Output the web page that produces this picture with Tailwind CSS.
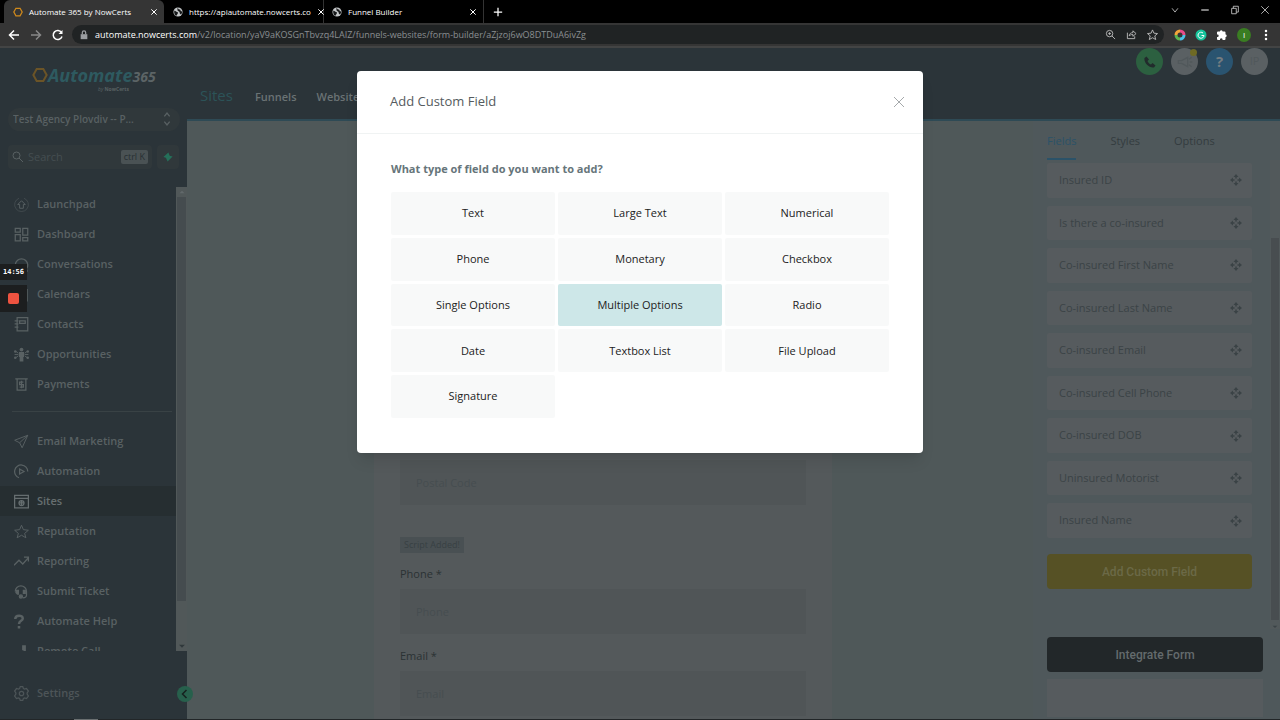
<!DOCTYPE html>
<html lang="en">
<head>
    <meta charset="UTF-8">
    <meta name="viewport" content="width=device-width, initial-scale=1.0">
    <title>Automate 365 by NowCerts</title>
    <script src="https://cdn.jsdelivr.net/npm/@tailwindcss/browser@4"></script>
</head>
<body class="relative h-screen overflow-hidden flex flex-col bg-[#2b3439] font-['Open_Sans','Noto_Sans',sans-serif] text-[11px]">
    <!-- Shared icons -->
    <svg class="hidden">
        <symbol id="move" viewBox="0 0 24 24">
            <path d="M12 0l5 6H7zM12 24l5-6H7zM0 12l6-5v10zM24 12l-6-5v10z" fill="currentColor"/>
            <path d="M12 5v4M12 15v4M5 12h4M15 12h4" stroke="currentColor" stroke-width="3" fill="none"/>
        </symbol>
        <symbol id="globe" viewBox="0 0 24 24">
            <circle cx="12" cy="12" r="11" fill="#c4c7c9"/>
            <path d="M3 9c4-1 4 3 7 3s2 4 0 6-1 4-3 3-5-6-4-12zM13 2c-2 3 0 4 3 4s1 4 4 4 2 5 0 7-4-1-4-4-5-2-5-5-2-5 2-6z" fill="#17191a"/>
        </symbol>
        <symbol id="cross" viewBox="0 0 24 24">
            <path d="M4 4l16 16M20 4L4 20" stroke="currentColor" fill="none" stroke-width="3"/>
        </symbol>
    </svg>

    <!-- Browser tabs -->
    <div class="h-[23px] shrink-0 flex items-stretch bg-black text-white text-[8px]">
        <div class="w-[160px] ml-1 flex items-center gap-1.5 pl-[9px] pr-1.5 rounded-t-md bg-[#353535]">
            <svg class="size-[10px] shrink-0" viewBox="0 0 24 24"><path d="M7 3h10l5 9-5 9H7l-5-9z" fill="none" stroke="#d08a1c" stroke-width="3"/></svg>
            <span class="grow whitespace-nowrap">Automate 365 by NowCerts</span>
            <button aria-label="Close tab"><svg class="size-2"><use href="#cross"/></svg></button>
        </div>
        <div class="w-[160px] flex items-center gap-1.5 pl-[9px] pr-1.5 border-r border-[#333]">
            <svg class="size-[10px] shrink-0"><use href="#globe"/></svg>
            <span class="grow whitespace-nowrap">https://apiautomate.nowcerts.co</span>
            <button aria-label="Close tab"><svg class="size-2"><use href="#cross"/></svg></button>
        </div>
        <div class="w-[160px] flex items-center gap-1.5 pl-2 pr-1.5 border-r border-[#333]">
            <svg class="size-[10px] shrink-0"><use href="#globe"/></svg>
            <span class="grow whitespace-nowrap">Funnel Builder</span>
            <button aria-label="Close tab"><svg class="size-2"><use href="#cross"/></svg></button>
        </div>
        <button class="px-[9px]" aria-label="New tab">
            <svg class="size-[10px]" viewBox="0 0 24 24"><path d="M12 2v20M2 12h20" stroke="currentColor" stroke-width="3"/></svg>
        </button>
        <div class="ml-auto mr-2.5 pb-1 flex items-center gap-5 text-[#ccc]">
            <svg class="size-[10px]" viewBox="0 0 24 24"><path d="M5 8l7 9 7-9" fill="none" stroke="currentColor" stroke-width="2"/></svg>
            <svg class="size-[10px]" viewBox="0 0 24 24"><path d="M3 12h18" stroke="currentColor" stroke-width="3"/></svg>
            <svg class="size-[10px]" viewBox="0 0 24 24" fill="none" stroke="currentColor" stroke-width="2"><path d="M4 8h11v13H4zM8 8V3h12v14h-5"/></svg>
            <svg class="size-[10px]" viewBox="0 0 24 24"><path d="M3 3l18 18M21 3L3 21" stroke="currentColor" stroke-width="2"/></svg>
        </div>
    </div>

    <!-- Address bar -->
    <div class="h-[25px] shrink-0 flex items-center bg-[#353535] border-b-2 border-[#434444] px-2 text-white">
        <div class="flex items-center gap-2.5 shrink-0">
            <svg class="size-3" viewBox="0 0 24 24" fill="none" stroke="currentColor" stroke-width="3"><path d="M22 12H3M12 3l-9 9 9 9"/></svg>
            <svg class="size-3 text-[#888]" viewBox="0 0 24 24" fill="none" stroke="currentColor" stroke-width="3"><path d="M2 12h19M12 3l9 9-9 9"/></svg>
            <svg class="size-3" viewBox="0 0 24 24" fill="none" stroke="currentColor" stroke-width="3"><path d="M20 15a9 9 0 1 1-1-8"/><path d="M21 2v8h-8z" fill="currentColor" stroke="none"/></svg>
        </div>
        <div class="ml-2 grow h-[19px] rounded-full bg-[#202324] flex items-center gap-1.5 pl-[7px] pr-1.5">
            <svg class="size-[10px] text-[#9a9da0]" viewBox="0 0 24 24"><rect x="4" y="10" width="16" height="12" fill="currentColor"/><path d="M8 10V6a4 4 0 0 1 8 0v4" fill="none" stroke="currentColor" stroke-width="3"/></svg>
            <div class="grow text-[9px] text-[#8b8f92] whitespace-nowrap" role="textbox" aria-label="Address"><span class="text-white">automate.nowcerts.com</span>/v2/location/yaV9aKOSGnTbvzq4LAIZ/funnels-websites/form-builder/aZjzoj6wO8DTDuA6ivZg</div>
            <div class="flex gap-2.5 text-[#bbb]">
                <svg class="size-[11px]" viewBox="0 0 24 24" fill="none" stroke="currentColor" stroke-width="2"><circle cx="10" cy="10" r="7"/><path d="M15 15l7 7M10 7v6M7 10h6"/></svg>
                <svg class="size-[11px]" viewBox="0 0 24 24" fill="none" stroke="currentColor" stroke-width="2"><path d="M3 8v13h16v-5M7 15c0-5 4-7 8-7V4l7 6-7 6v-4c-4 0-6 1-8 3z"/></svg>
                <svg class="size-[11px]" viewBox="0 0 24 24" fill="none" stroke="currentColor" stroke-width="2"><path d="M12 2l3 7 8 1-6 5 2 8-7-4-7 4 2-8-6-5 8-1z"/></svg>
            </div>
        </div>
        <div class="ml-2.5 flex items-center gap-[9px] shrink-0">
            <svg class="size-3" viewBox="0 0 24 24" fill="none" stroke-width="6"><path d="M12 4a8 8 0 0 1 8 8" stroke="#e94b8a"/><path d="M20 12a8 8 0 0 1-8 8" stroke="#4ac3e8"/><path d="M12 20a8 8 0 0 1-8-8" stroke="#5ab552"/><path d="M4 12a8 8 0 0 1 8-8" stroke="#f2a53a"/></svg>
            <svg class="size-3" viewBox="0 0 24 24" fill="none"><circle cx="12" cy="12" r="11" fill="#15c39a"/><path d="M16 8a6 6 0 1 0 2 5h-5" stroke="#fff" stroke-width="2"/></svg>
            <svg class="size-3" viewBox="0 0 24 24" fill="currentColor"><path d="M20 11h-1V7a2 2 0 0 0-2-2h-4V4a3 3 0 0 0-5 0v1H4a2 2 0 0 0-2 2v4h2a3 3 0 0 1 0 5H2v4a2 2 0 0 0 2 2h4v-2a3 3 0 0 1 5 0v2h4a2 2 0 0 0 2-2v-4h1a3 3 0 0 0 0-5z"/></svg>
            <span class="size-[14px] rounded-full bg-[#3a7d22] flex items-center justify-center text-[8px]">I</span>
            <svg class="size-3" viewBox="0 0 24 24" fill="currentColor"><circle cx="12" cy="4" r="2.5"/><circle cx="12" cy="12" r="2.5"/><circle cx="12" cy="20" r="2.5"/></svg>
        </div>
    </div>

    <div class="grow min-h-0 flex border-b border-[#222628]">
        <!-- Sidebar -->
        <aside class="relative w-[187px] shrink-0 flex flex-col bg-[#2b3439] text-[#596163]">
            <div class="h-[60px] pt-[17px] pl-8 flex items-start">
                <svg class="size-4 mt-0.5" viewBox="0 0 24 24"><path d="M7 3h10l5 9-5 9H7l-5-9z" fill="none" stroke="#6b5427" stroke-width="3"/></svg>
                <div class="leading-none">
                    <div class="font-bold italic text-lg leading-[20px] text-[#2e5a60]">Automate<span class="text-sm text-[#5c6466]">365</span></div>
                    <div class="pl-[50px] text-[5px] leading-none"><span class="italic">by</span> <b>NowCerts</b></div>
                </div>
            </div>
            <div class="px-2">
                <div class="relative">
                    <select aria-label="Location" class="appearance-none w-[172px] h-[23px] rounded-full bg-[#30383b] pl-[5px] text-[10px] font-semibold">
                        <option>Test Agency Plovdiv -- P...</option>
                    </select>
                    <svg class="absolute right-1 top-[3px] size-4 pointer-events-none" viewBox="0 0 24 24" fill="none" stroke="currentColor" stroke-width="2"><path d="M8 8l4-5 4 5M8 16l4 5 4-5"/></svg>
                </div>
                <div class="flex gap-[5px] mt-3.5">
                    <label class="w-[144px] h-6 flex items-center gap-1 px-1 rounded-sm bg-[#30383b]">
                        <svg class="size-3 shrink-0" viewBox="0 0 24 24" fill="none" stroke="currentColor" stroke-width="2"><circle cx="9" cy="9" r="7"/><path d="M14 14l8 8"/></svg>
                        <input type="text" placeholder="Search" aria-label="Search" class="grow min-w-0 placeholder:text-[#454e51]">
                        <kbd class="shrink-0 whitespace-nowrap px-[3px] rounded-xs bg-[#4a5254] text-[#283033] text-[9px] leading-[14px] font-['Open_Sans',sans-serif]">ctrl K</kbd>
                    </label>
                    <button aria-label="Quick actions" class="w-6 h-6 rounded-sm bg-[#30383b] flex items-center justify-center">
                        <svg class="size-[10px]" viewBox="0 0 24 24"><path d="M13 1L1 12l6 2 4 9 12-12-7-2z" fill="#25705a"/></svg>
                    </button>
                </div>
            </div>

            <div class="mt-[18px] h-[464px] flex overflow-hidden">
                <nav class="grow pt-0.5 font-semibold">
                    <a href="#" class="h-[30px] flex items-center gap-2 pl-3.5">
                        <svg class="size-[15px]" viewBox="0 0 24 24" fill="none" stroke="currentColor" stroke-width="1.5"><path d="M8 2a11 11 0 1 0 8 0" opacity=".5"/><path d="M9 18v-6H6l6-6 6 6h-3v6z"/></svg>Launchpad</a>
                    <a href="#" class="h-[30px] flex items-center gap-2 pl-3.5">
                        <svg class="size-[15px]" viewBox="0 0 24 24" fill="none" stroke="currentColor" stroke-width="2"><path d="M2 2h8v6H2zM14 2h8v11h-8zM2 12h8v10H2zM14 17h8v5h-8z"/></svg>Dashboard</a>
                    <a href="#" class="h-[30px] flex items-center gap-2 pl-3.5">
                        <svg class="size-[15px]" viewBox="0 0 24 24" fill="none" stroke="currentColor" stroke-width="2"><path d="M4 19a10 10 0 1 1 16 0l1 3-4-1H7z"/></svg>Conversations</a>
                    <a href="#" class="h-[30px] flex items-center gap-2 pl-3.5">
                        <svg class="size-[15px]" viewBox="0 0 24 24" fill="none" stroke="currentColor" stroke-width="2"><path d="M2 4h19v18H2zM2 9h19"/></svg>Calendars</a>
                    <a href="#" class="h-[30px] flex items-center gap-2 pl-3.5">
                        <svg class="size-[15px]" viewBox="0 0 24 24" fill="none" stroke="currentColor" stroke-width="2"><path d="M5 1h17v21H5zM9 6h9v4H9zM1 6h6M1 11h6M1 16h6"/></svg>Contacts</a>
                    <a href="#" class="h-[30px] flex items-center gap-2 pl-3.5">
                        <svg class="size-[15px]" viewBox="0 0 24 24" fill="currentColor"><circle cx="12" cy="4" r="3"/><path d="M8 8h8v8h-1v7H9v-7H8z"/><circle cx="2" cy="7" r="2"/><circle cx="22" cy="7" r="2"/><circle cx="2" cy="17" r="2"/><circle cx="22" cy="17" r="2"/><path d="M1 12h6M17 12h6M3 7l4 3M21 7l-4 3M3 17l4-3M21 17l-4-3" stroke="currentColor" stroke-width="1.5"/></svg>Opportunities</a>
                    <a href="#" class="h-[30px] flex items-center gap-2 pl-3.5">
                        <svg class="size-[15px]" viewBox="0 0 24 24" fill="none" stroke="currentColor" stroke-width="2"><path d="M2 3h20M5 3v18h14V3M15 8H9v4h6v4H9M12 6v12"/></svg>Payments</a>
                    <hr class="ml-3 mr-1 mt-3 mb-3.5 border-[#394245]">
                    <a href="#" class="h-[30px] flex items-center gap-2 pl-3.5">
                        <svg class="size-[15px]" viewBox="0 0 24 24" fill="none" stroke="currentColor" stroke-width="1.5"><path d="M22 2L1 10l8 4 4 8zM22 2L9 14"/></svg>Email Marketing</a>
                    <a href="#" class="h-[30px] flex items-center gap-2 pl-3.5">
                        <svg class="size-[15px]" viewBox="0 0 24 24" fill="none" stroke="currentColor" stroke-width="2"><path d="M8 22A10.500 10.500 0 1 1 22 12M9 8v8l7-4z"/></svg>Automation</a>
                    <a href="#" class="h-[30px] flex items-center gap-2 pl-3.5 bg-[#262e31] text-[#666e70]">
                        <svg class="size-[15px]" viewBox="0 0 24 24" fill="none" stroke="currentColor" stroke-width="2"><path d="M1 2h22v20H1zM1 7h22"/><circle cx="12" cy="14.500" r="4"/><path d="M8 14h8M12 10v9"/></svg>Sites</a>
                    <a href="#" class="h-[30px] flex items-center gap-2 pl-3.5">
                        <svg class="size-[15px]" viewBox="0 0 24 24" fill="none" stroke="currentColor" stroke-width="1.5"><path d="M12 2l3 7 8 1-6 5 2 7-7-4-7 4 2-7-6-5 8-1z"/></svg>Reputation</a>
                    <a href="#" class="h-[30px] flex items-center gap-2 pl-3.5">
                        <svg class="size-[15px]" viewBox="0 0 24 24" fill="none" stroke="currentColor" stroke-width="2"><path d="M0 18l8-8 6 6 9-10M16 5h7v7"/></svg>Reporting</a>
                    <a href="#" class="h-[30px] flex items-center gap-2 pl-3.5">
                        <svg class="size-[15px]" viewBox="0 0 24 24" fill="none" stroke="currentColor" stroke-width="2"><path d="M2 12a9 9 0 0 1 18 0v6c0 3-2 4-6 4"/><path d="M3 9h5v8H5l-3-3zM14 9h5v7h-5z" fill="currentColor" stroke="none"/><circle cx="11" cy="20" r="2.500" fill="currentColor"/></svg>Submit Ticket</a>
                    <a href="#" class="h-[30px] flex items-center gap-2 pl-3.5">
                        <svg class="size-[15px]" viewBox="0 0 24 24" fill="none" stroke="currentColor" stroke-width="4"><path d="M2 8c0-7 12-7 12-1 0 4-6 4-6 9M8 19v4"/></svg>Automate Help</a>
                    <a href="#" class="h-[30px] flex items-center gap-2 pl-3.5">
                        <svg class="size-[15px]" viewBox="0 0 24 24" fill="currentColor"><path d="M13 2h6v10l-3 3-1-5h-2z"/></svg>Remote Call</a>
                </nav>
                <!-- Scrollbar -->
                <div class="w-[11px] flex flex-col items-center justify-between bg-[#515859] text-[#30383b]">
                    <svg class="size-[10px] text-[#62696b]" viewBox="0 0 24 24"><path d="M6 15l6-6 6 6z" fill="currentColor"/></svg>
                    <div class="grow w-[9px] mb-10 bg-[#454c4f]"></div>
                    <svg class="size-[10px]" viewBox="0 0 24 24"><path d="M5 9l7 7 7-7z" fill="currentColor"/></svg>
                </div>
            </div>
            <a href="#" class="mt-[27px] h-[30px] flex items-center gap-2 pl-3.5 font-semibold text-[#4d5558]">
                <svg class="size-[15px]" viewBox="0 0 24 24" fill="none" stroke="currentColor" stroke-width="2"><circle cx="12" cy="12" r="3.500"/><path d="M10 1h4l1 3 2 1 3-1 3 4-2 3v2l2 3-3 4-3-1-2 1-1 3h-4l-1-3-2-1-3 1-3-4 2-3v-2L1 8l3-4 3 1 2-1z"/></svg>Settings</a>
            <button aria-label="Collapse sidebar" class="absolute -right-1.5 bottom-[17px] z-10 size-4 rounded-full bg-[#27604c] text-[#16211f] flex items-center justify-center">
                <svg class="size-3" viewBox="0 0 24 24" fill="none" stroke="currentColor" stroke-width="3"><path d="M15 4l-8 8 8 8"/></svg>
            </button>
        </aside>

        <div class="grow min-w-0 flex flex-col">
            <!-- Top bar -->
            <header class="h-[73px] shrink-0 flex justify-between border-b-2 border-[#2e4a55] pl-[13px] pr-3">
                <nav class="flex items-center gap-5 pt-7 font-semibold text-[#6a7274]">
                    <a href="#" class="pr-0.5 pb-1 text-[15px] font-normal text-[#2c5358]">Sites</a>
                    <a href="#">Funnels</a>
                    <a href="#">Websites</a>
                </nav>
                <div class="flex gap-2">
                    <button aria-label="Call" class="size-[27px] rounded-full bg-[#2c6040] text-[#222b2c] flex items-center justify-center">
                        <svg class="size-3" viewBox="0 0 24 24" fill="currentColor"><path d="M1 4l4-3 5 6-3 3c1 3 4 6 7 7l3-3 6 5-3 4C10 25-1 13 1 4z"/></svg>
                    </button>
                    <button aria-label="Announcements" class="relative size-[27px] rounded-full bg-[#5a6063] text-[#51585b] flex items-center justify-center">
                        <svg class="size-4" viewBox="0 0 24 24" fill="none" stroke="currentColor" stroke-width="2"><path d="M2 10h5l9-5v14l-9-5H2zM18 8l4-3M19 12h4M18 16l4 3"/></svg>
                        <span class="absolute right-px top-px size-[7px] rounded-full bg-[#6e6a24]"></span>
                    </button>
                    <button aria-label="Help" class="size-[27px] rounded-full bg-[#2a5470] text-[#747c80] font-bold text-[15px] flex items-center justify-center">?</button>
                    <button aria-label="Account" class="size-[27px] rounded-full bg-[#5a6063] text-[#51585b] flex items-center justify-center">IP</button>
                </div>
            </header>

            <div class="grow min-h-0 flex">
                <!-- Form canvas -->
                <main class="grow min-w-0 flex justify-center overflow-hidden bg-[#4f5859] pr-3.5">
                    <form class="w-[458px] flex flex-col justify-end bg-[#54595b] px-[26px] pb-[3px] text-[#2b3234]">
                        <input type="text" aria-label="Postal Code" placeholder="Postal Code" class="h-[45px] shrink-0 px-4 bg-[#505557] placeholder:text-[#464d50]">
                        <span class="self-start mt-8 px-1 bg-[#495053] text-[9px] leading-4 text-[#384043]">Script Added!</span>
                        <label for="phone" class="mt-3 leading-[18px]">Phone *</label>
                        <input id="phone" type="tel" placeholder="Phone" class="mt-1.5 h-[45px] shrink-0 px-4 bg-[#505557] placeholder:text-[#464d50]">
                        <label for="email" class="mt-[13px] leading-[18px]">Email *</label>
                        <input id="email" type="email" placeholder="Email" class="mt-1.5 h-[45px] shrink-0 px-4 bg-[#505557] placeholder:text-[#464d50]">
                    </form>
                </main>

                <!-- Field panel -->
                <aside class="w-[247px] shrink-0 flex flex-col bg-[#4f585b] pl-3.5">
                    <nav class="h-[39px] shrink-0 flex items-stretch gap-[34px] text-[#343c3f]">
                        <a href="#" class="pt-3 border-b-2 border-[#2b5268] text-[#2b5268]">Fields</a>
                        <a href="#" class="pt-3">Styles</a>
                        <a href="#" class="pt-3">Options</a>
                    </nav>
                    <div class="flex">
                        <div class="grow">
                            <ul class="mt-[3px] mr-[18px] h-[375px] grid auto-rows-fr gap-2 text-[#3b4346]">
                                <li class="flex items-center justify-between pl-3 pr-2.5 rounded-xs bg-[#565b5e]">Insured ID<svg class="size-3"><use href="#move"/></svg></li>
                                <li class="flex items-center justify-between pl-3 pr-2.5 rounded-xs bg-[#565b5e]">Is there a co-insured<svg class="size-3"><use href="#move"/></svg></li>
                                <li class="flex items-center justify-between pl-3 pr-2.5 rounded-xs bg-[#565b5e]">Co-insured First Name<svg class="size-3"><use href="#move"/></svg></li>
                                <li class="flex items-center justify-between pl-3 pr-2.5 rounded-xs bg-[#565b5e]">Co-insured Last Name<svg class="size-3"><use href="#move"/></svg></li>
                                <li class="flex items-center justify-between pl-3 pr-2.5 rounded-xs bg-[#565b5e]">Co-insured Email<svg class="size-3"><use href="#move"/></svg></li>
                                <li class="flex items-center justify-between pl-3 pr-2.5 rounded-xs bg-[#565b5e]">Co-insured Cell Phone<svg class="size-3"><use href="#move"/></svg></li>
                                <li class="flex items-center justify-between pl-3 pr-2.5 rounded-xs bg-[#565b5e]">Co-insured DOB<svg class="size-3"><use href="#move"/></svg></li>
                                <li class="flex items-center justify-between pl-3 pr-2.5 rounded-xs bg-[#565b5e]">Uninsured Motorist<svg class="size-3"><use href="#move"/></svg></li>
                                <li class="flex items-center justify-between pl-3 pr-2.5 rounded-xs bg-[#565b5e]">Insured Name<svg class="size-3"><use href="#move"/></svg></li>
                            </ul>
                            <div class="mt-4 mr-[18px] flex">
                                <button class="grow h-[35px] rounded-sm bg-[#565125] text-[#6b6947] text-xs font-medium font-[Roboto,sans-serif]">Add Custom Field</button>
                            </div>
                        </div>
                        <!-- Scrollbar -->
                        <div class="w-[10px] h-[469px] pt-[78px] flex flex-col items-center gap-1 bg-[#52595b] text-[#3b4346]">
                            <div class="w-2 h-[382px] shrink-0 bg-[#484d50]"></div>
                            <svg class="size-2 shrink-0" viewBox="0 0 24 24"><path d="M5 5l7 7 7-7z" fill="currentColor"/></svg>
                        </div>
                    </div>
                    <div class="mt-2 mr-[17px] flex flex-col gap-[7px]">
                        <button class="h-[35px] rounded-sm bg-[#222729] text-[#646b6d] text-xs font-medium font-[Roboto,sans-serif]">Integrate Form</button>
                        <div class="h-[38px] bg-[#565b5e]"></div>
                    </div>
                </aside>
            </div>
        </div>
    </div>

    <!-- Recorder controls -->
    <div class="absolute left-0 top-[264px] z-20 w-[27px]">
        <div class="h-4 bg-[#1c1e1f] text-white text-[7px] leading-4 font-bold text-center font-['DejaVu_Sans_Mono',monospace]">14:56</div>
        <button aria-label="Stop recording" class="mt-[5px] w-full h-[27px] bg-[#1c1e1f] flex items-center justify-center"><span class="size-[11px] rounded-xs bg-[#ee5340]"></span></button>
    </div>
    <div class="absolute left-[74px] bottom-0 w-6 h-px bg-[#6a6f70]"></div>

    <!-- Add custom field dialog -->
    <div class="absolute inset-x-0 top-[71px] z-30 flex justify-center">
        <section role="dialog" aria-labelledby="dialogTitle" class="w-full max-w-[566px] rounded-sm bg-white shadow-lg">
            <header class="h-[63px] flex items-center justify-between pl-[33px] pr-[18px] border-b border-[#f0f3f3]">
                <h2 id="dialogTitle" class="text-[13px] text-[#555b5e]">Add Custom Field</h2>
                <button aria-label="Close" class="text-[#a5a9ab]"><svg class="size-3" viewBox="0 0 24 24"><path d="M2 2l20 20M22 2L2 22" stroke="currentColor" stroke-width="2"/></svg></button>
            </header>
            <div class="px-[34px] pt-[26px] pb-[35px]">
                <h3 class="font-bold leading-[18px] text-[#66757a]">What type of field do you want to add?</h3>
                <div class="mt-3.5 h-[226px] grid grid-cols-3 auto-rows-fr gap-[3px] text-[#222]">
                    <button class="rounded-xs bg-[#f8f9f9]">Text</button>
                    <button class="rounded-xs bg-[#f8f9f9]">Large Text</button>
                    <button class="rounded-xs bg-[#f8f9f9]">Numerical</button>
                    <button class="rounded-xs bg-[#f8f9f9]">Phone</button>
                    <button class="rounded-xs bg-[#f8f9f9]">Monetary</button>
                    <button class="rounded-xs bg-[#f8f9f9]">Checkbox</button>
                    <button class="rounded-xs bg-[#f8f9f9]">Single Options</button>
                    <button class="rounded-xs bg-[#cde7e8]">Multiple Options</button>
                    <button class="rounded-xs bg-[#f8f9f9]">Radio</button>
                    <button class="rounded-xs bg-[#f8f9f9]">Date</button>
                    <button class="rounded-xs bg-[#f8f9f9]">Textbox List</button>
                    <button class="rounded-xs bg-[#f8f9f9]">File Upload</button>
                    <button class="rounded-xs bg-[#f8f9f9]">Signature</button>
                </div>
            </div>
        </section>
    </div>
</body>
</html>
